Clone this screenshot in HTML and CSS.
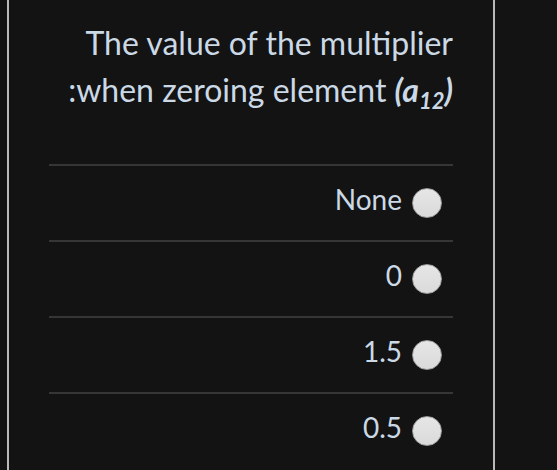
FILE: index.html
```html
<!DOCTYPE html>
<html lang="en">
<head>
<meta charset="utf-8">
<link rel="stylesheet" href="styles.css">
</head>
<body>
<div class="panel">
  <div class="question" dir="rtl">
    <p class="q-text">The value of the multiplier when zeroing element <span class="math">(a<sub>12</sub>)</span>:</p>
  </div>
  <ul class="options">
    <li class="option"><span class="label">None</span><span class="radio"></span></li>
    <li class="option"><span class="label">0</span><span class="radio"></span></li>
    <li class="option"><span class="label">1.5</span><span class="radio"></span></li>
    <li class="option"><span class="label">0.5</span><span class="radio"></span></li>
  </ul>
</div>
</body>
</html>
```
FILE: styles.css
```css
html, body {
  margin: 0;
  padding: 0;
  background: #131313;
  height: 100%;
  overflow: hidden;
}
body {
  font-family: Lato, "Liberation Sans", sans-serif;
  color: #cbd9e6;
}
.panel {
  margin-left: 7px;
  width: 488px;
  height: 100%;
  border-left: 2px solid #b9b9b9;
  border-right: 2px solid #b9b9b9;
  padding: 0 40px;
  box-sizing: border-box;
}
.question {
  padding-top: 20px;
  padding-bottom: 51px;
}
.q-text {
  margin: 0;
  font-size: 32px;
  line-height: 46.5px;
  text-align: right;
}
.math {
  font-style: italic;
  font-weight: bold;
}
.math sub {
  font-size: 22px;
  line-height: 0;
  vertical-align: -7px;
}
.options {
  list-style: none;
  margin: 0;
  padding: 0;
}
.option {
  height: 74px;
  border-top: 2px solid #363636;
  display: flex;
  align-items: center;
  justify-content: flex-end;
  gap: 10px;
  padding-right: 11px;
}
.label {
  font-size: 28px;
  margin-bottom: 9px;
}
.radio {
  width: 28px;
  height: 28px;
  border-radius: 50%;
  border: 1px solid #9c9c9c;
  background: linear-gradient(#e6e6e6, #dadada);
}
```
